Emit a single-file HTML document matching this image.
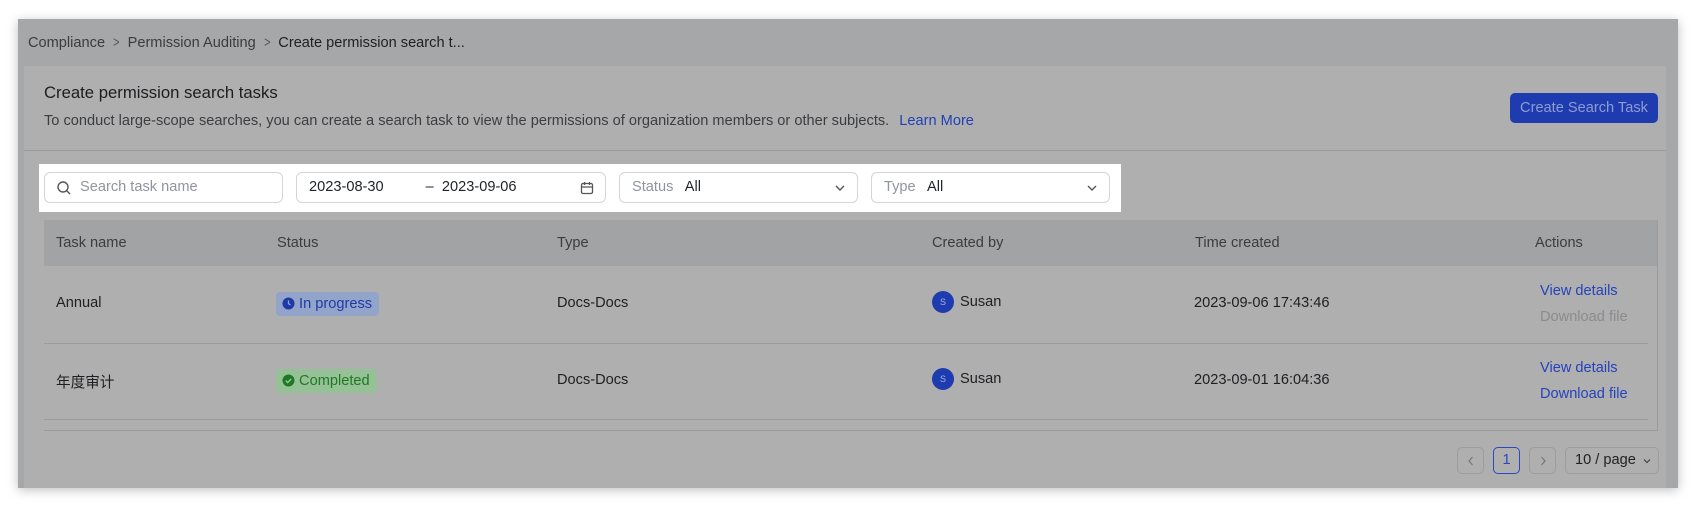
<!DOCTYPE html>
<html><head><meta charset="utf-8"><style>
*{box-sizing:border-box;margin:0;padding:0}
body{width:1696px;height:506px;background:#fff;font-family:"Liberation Sans","Noto Sans CJK SC",sans-serif;font-size:14.6px;color:#222;position:relative;overflow:hidden}
.abs{position:absolute}
.frame{left:18px;top:19px;width:1660px;height:469px;background:#a6a7a9;box-shadow:0 2px 10px rgba(0,0,0,.25)}
.panel{left:24px;top:66px;width:1642px;height:422px;background:#afafaf}
.crumb{left:28px;top:35px;font-size:14.6px;color:#3a3c40;white-space:nowrap}
.crumb b{font-weight:normal;color:#1e1f22}
.crumb i{font-style:normal;margin:0 7px;color:#555;display:inline-block;transform:scaleX(.75)}
.title{left:44px;top:83px;font-size:16.7px;color:#1c1d20}
.desc{left:44px;top:113px;font-size:14.6px;color:#3b3d41}
.desc span{color:#2140b8;margin-left:6px}
.btn{left:1510px;top:93px;width:148px;height:30px;background:#1e3cb0;border-radius:5px;color:#8e9cd0;font-size:14.6px;text-align:center;line-height:30px}
.div{left:24px;top:150px;width:1642px;height:1px;background:#9a9b9d}
.white{left:39px;top:164px;width:1082px;height:48px;background:#fff}
.inp{height:31px;top:172px;border:1px solid #d3d5d9;border-radius:6px;background:#fff;font-size:14.6px;line-height:29px;color:#1f2329;padding-left:12px;white-space:nowrap}
.ph{color:#8f959e}
.thead{left:44px;top:220px;width:1614px;height:46px;background:#a2a3a5}
.th{top:235px;color:#3a3c40;font-size:14.6px}
.td{font-size:14.6px;color:#1e1f22;white-space:nowrap}
.line{height:1px;background:#9b9c9e}
.tag{height:24px;border-radius:4px;font-size:14.6px;line-height:24px;padding:0 7px 0 6px}
.av{width:22px;height:22px;border-radius:50%;background:#1e3cb0;color:#a8b4e0;font-size:9px;text-align:center;line-height:22px}
.lk{color:#2442bd;font-size:14.6px}
.pg{top:447px;height:27px;border:1px solid #9c9d9f;border-radius:5px;text-align:center;line-height:25px;color:#666}
</style></head><body>
<div class="abs frame"></div>
<div class="abs panel"></div>
<div class="abs crumb">Compliance<i>&gt;</i>Permission Auditing<i>&gt;</i><b>Create permission search t...</b></div>
<div class="abs title">Create permission search tasks</div>
<div class="abs desc">To conduct large-scope searches, you can create a search task to view the permissions of organization members or other subjects. <span>Learn More</span></div>
<div class="abs btn">Create Search Task</div>
<div class="abs div"></div>
<div class="abs white"></div>
<div class="abs inp" style="left:44px;width:239px;padding-left:35px"><span class="ph">Search task name</span>
<svg class="abs" style="left:11px;top:7px" width="16" height="16" viewBox="0 0 16 16"><circle cx="7" cy="7" r="5" fill="none" stroke="#555" stroke-width="1.4"/><path d="M10.6 10.6L14 14" stroke="#555" stroke-width="1.4"/></svg></div>
<div class="abs inp" style="left:296px;width:310px">2023-08-30<span style="margin-left:42px">–&nbsp; 2023-09-06</span>
<svg class="abs" style="left:283px;top:8px" width="14" height="14" viewBox="0 0 14 14"><rect x="1.5" y="2.5" width="11" height="10" rx="1.5" fill="none" stroke="#555" stroke-width="1.3"/><path d="M1.5 6h11M4.5 1v3M9.5 1v3" stroke="#555" stroke-width="1.3"/></svg></div>
<div class="abs inp" style="left:619px;width:239px"><span class="ph">Status</span>&nbsp;&nbsp; All
<svg class="abs" style="left:215px;top:11px" width="10" height="8" viewBox="0 0 10 8"><path d="M1 2l4 4 4-4" fill="none" stroke="#555" stroke-width="1.4"/></svg></div>
<div class="abs inp" style="left:871px;width:239px"><span class="ph">Type</span>&nbsp;&nbsp; All
<svg class="abs" style="left:215px;top:11px" width="10" height="8" viewBox="0 0 10 8"><path d="M1 2l4 4 4-4" fill="none" stroke="#555" stroke-width="1.4"/></svg></div>

<div class="abs thead"></div>
<div class="abs th" style="left:56px">Task name</div>
<div class="abs th" style="left:277px">Status</div>
<div class="abs th" style="left:557px">Type</div>
<div class="abs th" style="left:932px">Created by</div>
<div class="abs th" style="left:1195px">Time created</div>
<div class="abs th" style="left:1535px">Actions</div>

<div class="abs td" style="left:56px;top:295px">Annual</div>
<div class="abs tag" style="left:276px;top:292px;background:#93a4ca;color:#1f3aa6">
<svg style="vertical-align:-2px" width="13" height="13" viewBox="0 0 13 13"><circle cx="6.5" cy="6.5" r="6" fill="#1f3aa6"/><path d="M6.5 3.5v3.2l2 1.3" stroke="#93a4ca" stroke-width="1.3" fill="none"/></svg> In progress</div>
<div class="abs td" style="left:557px;top:295px">Docs-Docs</div>
<div class="abs av" style="left:932px;top:291px">S</div>
<div class="abs td" style="left:960px;top:294px">Susan</div>
<div class="abs td" style="left:1194px;top:295px">2023-09-06 17:43:46</div>
<div class="abs lk" style="left:1540px;top:283px">View details</div>
<div class="abs lk" style="left:1540px;top:309px;color:#8a8b8e">Download file</div>
<div class="abs line" style="left:44px;top:343px;width:1604px"></div>

<div class="abs td" style="left:56px;top:371px">年度审计</div>
<div class="abs tag" style="left:276px;top:369px;background:#96c096;color:#1d7a22">
<svg style="vertical-align:-2px" width="13" height="13" viewBox="0 0 13 13"><circle cx="6.5" cy="6.5" r="6" fill="#1d7a22"/><path d="M3.8 6.6l1.9 1.9 3.5-3.6" stroke="#96c096" stroke-width="1.5" fill="none"/></svg> Completed</div>
<div class="abs td" style="left:557px;top:372px">Docs-Docs</div>
<div class="abs av" style="left:932px;top:368px">S</div>
<div class="abs td" style="left:960px;top:371px">Susan</div>
<div class="abs td" style="left:1194px;top:372px">2023-09-01 16:04:36</div>
<div class="abs lk" style="left:1540px;top:360px">View details</div>
<div class="abs lk" style="left:1540px;top:386px">Download file</div>
<div class="abs line" style="left:44px;top:419px;width:1604px"></div>
<div class="abs line" style="left:44px;top:430px;width:1614px"></div>
<div class="abs line" style="left:1657px;top:220px;width:1px;height:211px"></div>

<div class="abs pg" style="left:1457px;width:27px"><svg width="8" height="12" viewBox="0 0 8 12" style="margin-top:7px"><path d="M5.5 2L2 6l3.5 4" fill="none" stroke="#777" stroke-width="1.2"/></svg></div>
<div class="abs pg" style="left:1493px;width:27px;border-color:#2a48c0;color:#2a48c0">1</div>
<div class="abs pg" style="left:1529px;width:27px"><svg width="8" height="12" viewBox="0 0 8 12" style="margin-top:7px"><path d="M2.5 2L6 6l-3.5 4" fill="none" stroke="#777" stroke-width="1.2"/></svg></div>
<div class="abs pg" style="left:1565px;width:94px;color:#222;text-align:left;padding-left:9px">10 / page
<svg class="abs" style="left:77px;top:10px" width="8" height="6" viewBox="0 0 8 6"><path d="M1 1.5l3 3 3-3" fill="none" stroke="#444" stroke-width="1.2"/></svg></div>
</body></html>
